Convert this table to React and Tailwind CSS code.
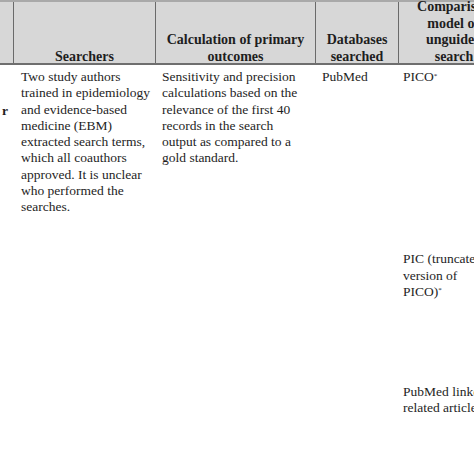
export default function App() {
  const serif = { fontFamily: '"Liberation Serif", "Times New Roman", serif' };
  return (
    <div className="w-[474px] h-[474px] overflow-hidden bg-white text-[#1e1e1e]" style={serif}>
      {/* header */}
      <div className="flex h-[65px] bg-[#d7d7d7] border-t-2 border-t-[#a9a9a9] border-b-2 border-b-[#6e6e6e] text-[14px] leading-[16.5px] font-bold">
        <div className="w-[14px] shrink-0 border-r-[1.5px] border-[#6a6a6a]" />
        <div className="w-[142px] shrink-0 border-r-[1.5px] border-[#6a6a6a] flex items-end justify-center">
          <div className="translate-y-[2px]">Searchers</div>
        </div>
        <div className="w-[160px] shrink-0 border-r-[1.5px] border-[#6a6a6a] flex items-end justify-center text-center">
          <div className="translate-y-[2px]">
            Calculation of primary
            <br />
            outcomes
          </div>
        </div>
        <div className="w-[83px] shrink-0 border-r-[1.5px] border-[#6a6a6a] flex items-end justify-center text-center">
          <div className="translate-y-[2px]">
            Databases
            <br />
            searched
          </div>
        </div>
        <div className="w-[110px] shrink-0 flex items-end justify-center text-center whitespace-nowrap">
          <div className="translate-y-[2px]">
            Comparison
            <br />
            model or
            <br />
            unguided
            <br />
            search
          </div>
        </div>
      </div>

      {/* body */}
      <div className="flex text-[13.5px] leading-[16.3px] whitespace-nowrap">
        <div className="w-[14px] shrink-0 overflow-hidden pt-[38px] font-bold">
          <div className="flex justify-end pr-[6px]">r</div>
        </div>
        <div className="w-[142px] shrink-0 pl-[7px] pt-[4px]">
          Two study authors
          <br />
          trained in epidemiology
          <br />
          and evidence-based
          <br />
          medicine (EBM)
          <br />
          extracted search terms,
          <br />
          which all coauthors
          <br />
          approved. It is unclear
          <br />
          who performed the
          <br />
          searches.
        </div>
        <div className="w-[160px] shrink-0 pl-[6px] pt-[4px]">
          Sensitivity and precision
          <br />
          calculations based on the
          <br />
          relevance of the first 40
          <br />
          records in the search
          <br />
          output as compared to a
          <br />
          gold standard.
        </div>
        <div className="w-[83px] shrink-0 pl-[6px] pt-[4px]">PubMed</div>
        <div className="w-[110px] shrink-0 pl-[4px] pt-[4px] flex flex-col">
          <div>
            PICO<sup className="text-[7px]">*</sup>
          </div>
          <div className="mt-[166px]">
            PIC (truncated
            <br />
            version of
            <br />
            PICO)<sup className="text-[7px]">*</sup>
          </div>
          <div className="mt-[84px]">
            PubMed linked
            <br />
            related articles
          </div>
        </div>
      </div>
    </div>
  );
}
